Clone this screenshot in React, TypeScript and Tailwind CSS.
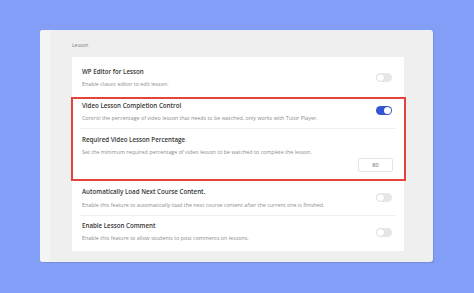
import React from 'react';

const font = { fontFamily: '"Open Sans", "Noto Sans", Arial, sans-serif' };

const Toggle: React.FC<{ on?: boolean; className?: string }> = ({ on, className }) => (
  <div
    className={
      'w-[16px] h-[9px] rounded-full flex items-center px-[1px] ' +
      (on ? 'bg-[#3455d6] justify-end' : 'bg-[#e6e6e6] justify-start') +
      ' ' + (className || '')
    }
  >
    <div className="w-[7px] h-[7px] rounded-full bg-white shadow-[0_0_1px_rgba(0,0,0,0.2)]" />
  </div>
);

const Title: React.FC<{ children: React.ReactNode }> = ({ children }) => (
  <div className="h-[10px] leading-[10px] text-[6.2px] font-semibold text-[#353535] whitespace-nowrap">{children}</div>
);

const Desc: React.FC<{ children: React.ReactNode; className?: string }> = ({ children, className }) => (
  <div className={'h-[8px] leading-[8px] text-[5.35px] text-[#8c8c8c] whitespace-nowrap ' + (className || '')}>{children}</div>
);

export default function App() {
  return (
    <div className="w-[474px] h-[293px] bg-[#839ef6] pt-[30px] pl-[40px] overflow-hidden" style={font}>
      <div className="w-[393px] h-[232px] bg-[#efefef] rounded-[3px] flex shadow-[1px_1px_1px_rgba(80,90,130,0.25)]">
        {/* light left strip */}
        <div className="w-[10px] h-full bg-[#f4f4f4] rounded-l-[3px]" />

        <div className="pl-[22px] pt-[11px]">
          <div className="h-[8px] leading-[8px] text-[5px] text-[#7a7a7a]">Lesson</div>

          <div className="mt-[8px] w-[332px] bg-white">
            {/* WP Editor */}
            <div className="h-[40px] px-[10px] flex items-center justify-between">
              <div>
                <Title>WP Editor for Lesson</Title>
                <Desc className="mt-[3px]">Enable classic editor to edit lesson.</Desc>
              </div>
              <Toggle className="mr-[2px]" />
            </div>

            {/* highlighted block */}
            <div className="-ml-[1px] -mr-[2px] h-[84px] border-2 border-[#e2443b]">
              <div className="ml-[7px] mr-[9px]">
                <div className="h-[30px] border-b border-[#eeeeee] flex justify-between">
                  <div className="pl-[2px] pt-[2px]">
                    <Title>Video Lesson Completion Control</Title>
                    <Desc className="mt-[3px]">
                      Control the percentage of video lesson that needs to be watched, only works with Tutor Player.
                    </Desc>
                  </div>
                  <Toggle on className="mt-[7px] mr-[3px]" />
                </div>
                <div className="pt-[6px] pl-[2px]">
                  <Title>Required Video Lesson Percentage</Title>
                  <Desc className="mt-[3px]">
                    Set the minimum required percentage of video lesson to be watched to complete the lesson.
                  </Desc>
                  <div className="mt-[2px] flex justify-end pr-[2px]">
                    <div className="w-[35px] h-[14px] border border-[#e4e4e4] rounded-[2px] flex items-center justify-center text-[5.5px] text-[#555555]">
                      80
                    </div>
                  </div>
                </div>
              </div>
            </div>

            {/* auto load */}
            <div className="mx-[8px]">
              <div className="h-[35px] border-b border-[#eeeeee] flex justify-between">
                <div className="pl-[2px] pt-[6px]">
                  <Title>Automatically Load Next Course Content.</Title>
                  <Desc className="mt-[4px]">
                    Enable this feature to automatically load the next course content after the current one is finished.
                  </Desc>
                </div>
                <Toggle className="mt-[12px] mr-[4px]" />
              </div>
              <div className="h-[35px] flex justify-between">
                <div className="pl-[2px] pt-[5px]">
                  <Title>Enable Lesson Comment</Title>
                  <Desc className="mt-[3px]">Enable this feature to allow students to post comments on lessons.</Desc>
                </div>
                <Toggle className="mt-[12px] mr-[4px]" />
              </div>
            </div>
          </div>
        </div>
      </div>
    </div>
  );
}
